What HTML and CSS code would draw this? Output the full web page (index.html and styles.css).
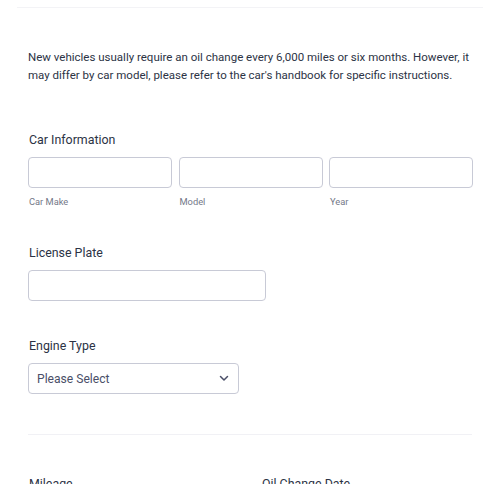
FILE: index.html
```html
<!DOCTYPE html>
<html lang="en">
<head>
<meta charset="utf-8">
<link rel="stylesheet" href="styles.css">
</head>
<body>
<div class="page">
  <div class="top-divider"></div>
  <div class="form">
    <p class="intro">New vehicles usually require an oil change every 6,000 miles or six months. However, it may differ by car model, please refer to the car's handbook for specific instructions.</p>

    <div class="field field-car">
      <div class="label">Car Information</div>
      <div class="triple">
        <div class="sub">
          <div class="input"></div>
          <div class="sublabel">Car Make</div>
        </div>
        <div class="sub">
          <div class="input"></div>
          <div class="sublabel">Model</div>
        </div>
        <div class="sub">
          <div class="input"></div>
          <div class="sublabel">Year</div>
        </div>
      </div>
    </div>

    <div class="field field-plate">
      <div class="label">License Plate</div>
      <div class="input input-plate"></div>
    </div>

    <div class="field field-engine">
      <div class="label">Engine Type</div>
      <div class="input select">
        <span class="select-text">Please Select</span>
        <svg class="chev" width="10" height="7" viewBox="0 0 10 7"><path d="M1.5 1.5 L5 5 L8.5 1.5" fill="none" stroke="#4a4f68" stroke-width="1.5" stroke-linecap="round" stroke-linejoin="round"/></svg>
      </div>
    </div>

    <div class="divider"></div>

    <div class="pair">
      <div class="label">Mileage</div>
      <div class="label">Oil Change Date</div>
    </div>
  </div>
</div>
</body>
</html>
```

FILE: styles.css
```css
html, body {
  margin: 0;
  padding: 0;
  background: #ffffff;
}
body {
  font-family: Roboto, "Liberation Sans", sans-serif;
  color: #2c3345;
  overflow: hidden;
  height: 484px;
}
.top-divider {
  margin: 7px 17px 0;
  height: 1px;
  background: #f3f3f6;
}
.form {
  padding: 0 28px;
}
.intro {
  margin: 40px 0 0;
  font-size: 11.5px;
  line-height: 18px;
  color: #2c3345;
}
.label {
  font-size: 12.4px;
  line-height: 16px;
  padding-top: 1px;
  color: #2c3345;
  padding-left: 1px;
}
.field-car {
  margin-top: 47px;
}
.triple {
  display: grid;
  grid-template-columns: 144px 144px 144px;
  column-gap: 6.5px;
  margin-top: 9px;
}
.input {
  height: 29px;
  border: 1px solid #c8cad6;
  border-radius: 4px;
  background: #fff;
  box-sizing: content-box;
}
.sub .input {
  width: 142px;
}
.sublabel {
  margin-top: 8px;
  font-size: 9.3px;
  line-height: 12px;
  color: #737888;
  padding-left: 1px;
}
.field-plate {
  margin-top: 36px;
}
.input-plate {
  width: 236px;
  margin-top: 9px;
}
.field-engine {
  margin-top: 36px;
}
.select {
  margin-top: 9px;
  display: flex;
  align-items: center;
  justify-content: space-between;
  padding: 0 8px 0 8px;
  box-sizing: border-box;
  width: 211px;
  height: 31px;
}
.select-text {
  font-size: 12.1px;
  color: #4a4f68;
}
.chev {
  margin-right: 1px;
}
.divider {
  margin-top: 40px;
  height: 1px;
  background: #f1f1f5;
}
.pair {
  display: grid;
  grid-template-columns: 233px 1fr;
  margin-top: 40px;
}
```
